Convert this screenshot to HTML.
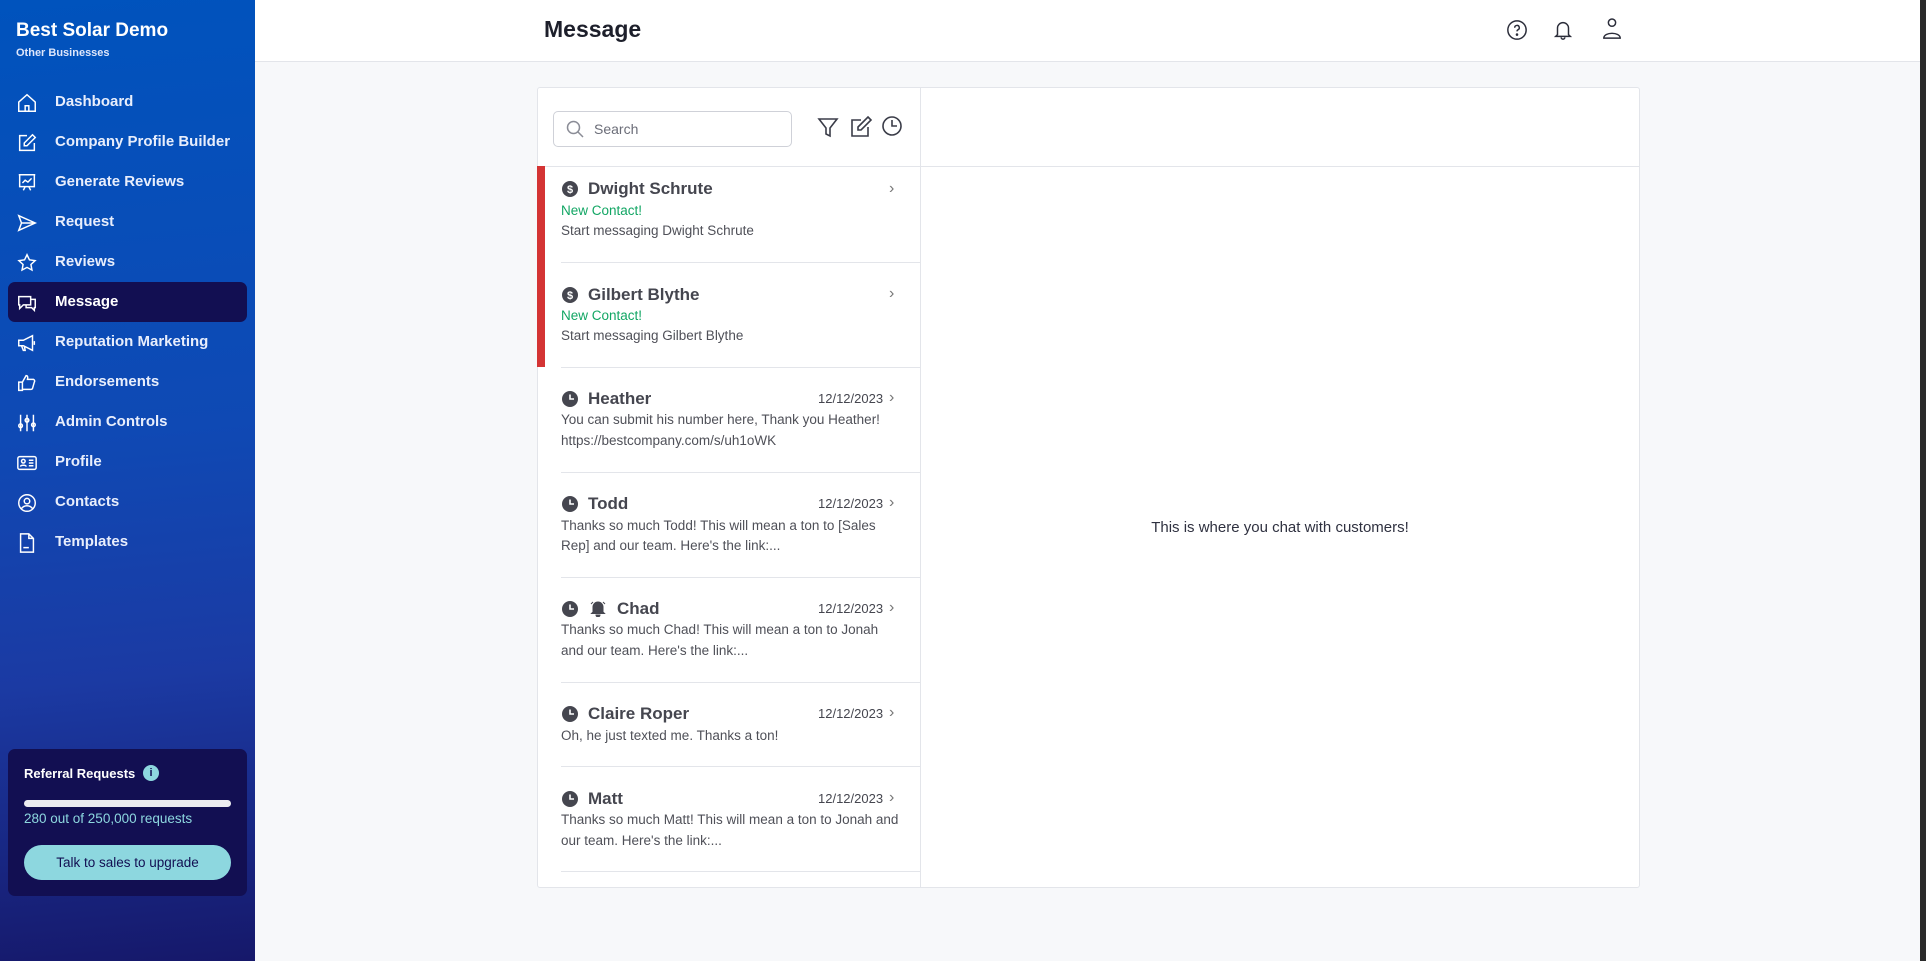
<!DOCTYPE html>
<html><head><meta charset="utf-8"><style>
*{box-sizing:border-box;margin:0;padding:0}
body{width:1926px;height:961px;overflow:hidden;font-family:"Liberation Sans",sans-serif;background:#f7f8fa;position:relative}
.abs{position:absolute}
#side{left:0;top:0;width:255px;height:961px;background:linear-gradient(175deg,#0053bd 0%,#0f49b4 45%,#1b3aa3 70%,#16186a 100%)}
.nav{position:absolute;left:0;width:255px;height:40px;color:#e8eefc;font-size:15px;font-weight:bold;line-height:40px}
.nav span{position:absolute;left:55px}
.nav svg{position:absolute;left:16px;top:10px}
.nav.active{left:8px;width:239px;background:#120f52;border-radius:7px;color:#fff}
.nav.active span{left:47px}.nav.active svg{left:8px}
#hdr{left:255px;top:0;width:1665px;height:62px;background:#fff;border-bottom:1px solid #e3e5ea}
#panel{left:537px;top:87px;width:1103px;height:801px;background:#fff;border:1px solid #e3e5ea;border-radius:3px}
.ln{position:absolute;line-height:20px;white-space:nowrap}
.nm{font-size:17px;font-weight:bold;color:#45464f}
.gr{font-size:13.5px;color:#12a664}
.tx{font-size:13.5px;color:#4f5058}
.sep{position:absolute;left:561px;width:359px;height:1px;background:#e3e5ea}
.scroll{left:1920px;top:0;width:6px;height:961px;background:#2a2a2a}
</style></head><body>
<svg style="position:absolute;width:0;height:0"><defs>
<symbol id="dol" viewBox="0 0 16 16"><circle cx="8" cy="8" r="8" fill="#45464f"/><text x="8" y="12" text-anchor="middle" font-size="11" font-weight="bold" fill="#fff" font-family="Liberation Sans">$</text></symbol>
<symbol id="clk" viewBox="0 0 16 16"><circle cx="8" cy="8" r="8" fill="#45464f"/><path d="M8 3.5V8h4" stroke="#fff" stroke-width="1.6" fill="none"/></symbol>
</defs></svg>
<div id="side" class="abs">
<div class="abs" style="left:16px;top:20px;color:#fff;font-size:19px;font-weight:bold">Best Solar Demo</div>
<div class="abs" style="left:16px;top:47px;color:#dfe7fb;font-size:11px;font-weight:bold">Other Businesses</div>

<div class="nav" style="top:82px"><svg width="22" height="22" viewBox="0 0 24 24" fill="none" stroke="#fff" stroke-width="1.6"><path d="M3 11 12 3l9 8v10H3z"/><path d="M10 21v-6h4v6"/></svg><span>Dashboard</span></div>
<div class="nav" style="top:122px"><svg width="22" height="22" viewBox="0 0 24 24" fill="none" stroke="#fff" stroke-width="1.6"><path d="M12 4H4v16h16v-8"/><path d="M18 3l3 3-9 9H9v-3z"/></svg><span>Company Profile Builder</span></div>
<div class="nav" style="top:162px"><svg width="22" height="22" viewBox="0 0 24 24" fill="none" stroke="#fff" stroke-width="1.6"><path d="M3 3h18M4 3v13h16V3M8 20l2-4M16 20l-2-4M7 12l3-3 3 2 4-4"/></svg><span>Generate Reviews</span></div>
<div class="nav" style="top:202px"><svg width="22" height="22" viewBox="0 0 24 24" fill="none" stroke="#fff" stroke-width="1.6"><path d="M3 4l18 8-18 8 3-8z M6 12h15"/></svg><span>Request</span></div>
<div class="nav" style="top:242px"><svg width="22" height="22" viewBox="0 0 24 24" fill="none" stroke="#fff" stroke-width="1.6"><path d="M12 3l2.7 5.6 6.1.8-4.5 4.2 1.1 6.1L12 16.8 6.6 19.7l1.1-6.1L3.2 9.4l6.1-.8z"/></svg><span>Reviews</span></div>
<div class="nav active" style="top:282px"><svg width="22" height="22" viewBox="0 0 24 24" fill="none" stroke="#fff" stroke-width="1.6"><path d="M3 5h13v9H8l-4 4v-4H3z"/><path d="M16 8h5v9h-1v3l-3-3h-6v-3"/></svg><span>Message</span></div>
<div class="nav" style="top:322px"><svg width="22" height="22" viewBox="0 0 24 24" fill="none" stroke="#fff" stroke-width="1.6"><path d="M3 9h5l10-5v16L8 15H3z M6 15l2 5h2l-1-5M20 10v4"/></svg><span>Reputation Marketing</span></div>
<div class="nav" style="top:362px"><svg width="22" height="22" viewBox="0 0 24 24" fill="none" stroke="#fff" stroke-width="1.6"><path d="M3 11h4v9H3zM7 11l4-7c2 0 2 2 1.5 4H19a2 2 0 0 1 1 3l-2 7a2 2 0 0 1-2 1H7"/></svg><span>Endorsements</span></div>
<div class="nav" style="top:402px"><svg width="22" height="22" viewBox="0 0 24 24" fill="none" stroke="#fff" stroke-width="1.6"><path d="M5 3v18M12 3v18M19 3v18"/><circle cx="5" cy="15" r="2"/><circle cx="12" cy="9" r="2"/><circle cx="19" cy="14" r="2"/></svg><span>Admin Controls</span></div>
<div class="nav" style="top:442px"><svg width="22" height="22" viewBox="0 0 24 24" fill="none" stroke="#fff" stroke-width="1.6"><rect x="2" y="5" width="20" height="14" rx="2"/><circle cx="8" cy="10" r="2"/><path d="M5 16c0-2 6-2 6 0M14 9h5M14 12h5M14 15h5"/></svg><span>Profile</span></div>
<div class="nav" style="top:482px"><svg width="22" height="22" viewBox="0 0 24 24" fill="none" stroke="#fff" stroke-width="1.6"><circle cx="12" cy="12" r="9"/><circle cx="12" cy="10" r="3"/><path d="M6 18c3-4 9-4 12 0"/></svg><span>Contacts</span></div>
<div class="nav" style="top:522px"><svg width="22" height="22" viewBox="0 0 24 24" fill="none" stroke="#fff" stroke-width="1.6"><path d="M5 2h9l5 5v15H5z M14 2v5h5M8 17h6"/></svg><span>Templates</span></div>

<div class="abs" style="left:8px;top:749px;width:239px;height:147px;background:#120f52;border-radius:7px">
<div class="abs" style="left:16px;top:17px;color:#fff;font-size:13px;font-weight:bold">Referral Requests</div>
<div class="abs" style="left:135px;top:16px;width:16px;height:16px;border-radius:8px;background:#8dd7df;color:#120f52;font-size:11px;font-weight:bold;text-align:center;line-height:16px">i</div>
<div class="abs" style="left:16px;top:51px;width:207px;height:7px;border-radius:4px;background:#ececf0"></div>
<div class="abs" style="left:16px;top:62px;color:#8dd7df;font-size:13.5px">280 out of 250,000 requests</div>
<div class="abs" style="left:16px;top:96px;width:207px;height:35px;border-radius:18px;background:#8dd7df;color:#120f52;font-size:13.5px;text-align:center;line-height:35px">Talk to sales to upgrade</div>
</div>
</div>

<div id="hdr" class="abs">
<div class="abs" style="left:289px;top:16px;font-size:23px;font-weight:bold;color:#1d1f2b">Message</div>
<svg class="abs" style="left:1251px;top:19px" width="22" height="22" viewBox="0 0 24 24" fill="none" stroke="#2b2d3a" stroke-width="1.6"><circle cx="12" cy="12" r="10"/><path d="M9.5 9.5a2.5 2.5 0 1 1 3.5 2.3c-.7.4-1 .9-1 1.7"/><circle cx="12" cy="17" r=".6" fill="#2b2d3a"/></svg>
<svg class="abs" style="left:1297px;top:18px" width="22" height="24" viewBox="0 0 24 26" fill="none" stroke="#2b2d3a" stroke-width="1.6"><path d="M6 18V11a6 6 0 0 1 12 0v7l2 2H4z M10 21a2 2 0 0 0 4 0"/></svg>
<svg class="abs" style="left:1347px;top:17px" width="20" height="24" viewBox="0 0 22 26" fill="none" stroke="#2b2d3a" stroke-width="1.6"><circle cx="11" cy="6" r="4"/><path d="M2 23c0-7 18-7 18 0z"/></svg>
</div>

<div id="panel" class="abs"></div>
<div class="abs" style="left:920px;top:88px;width:1px;height:799px;background:#e3e5ea"></div>
<div class="abs" style="left:538px;top:166px;width:1101px;height:1px;background:#e3e5ea"></div>
<div class="abs" style="left:553px;top:111px;width:239px;height:36px;border:1px solid #cfd1d8;border-radius:5px;background:#fff"></div>
<svg class="abs" style="left:565px;top:119px" width="20" height="20" viewBox="0 0 20 20" fill="none" stroke="#8a8c96" stroke-width="1.5"><circle cx="8.5" cy="8.5" r="6"/><path d="M13 13l5 5"/></svg>
<div class="abs" style="left:594px;top:119px;font-size:14px;color:#6b6d78;line-height:20px">Search</div>
<svg class="abs" style="left:817px;top:116px" width="22" height="24" viewBox="0 0 22 24" fill="none" stroke="#3a3c48" stroke-width="1.6"><path d="M2 3h18l-7 9v8l-4-2v-6z"/></svg>
<svg class="abs" style="left:849px;top:115px" width="24" height="24" viewBox="0 0 24 24" fill="none" stroke="#3a3c48" stroke-width="1.6"><path d="M12 5H3v16h16v-9"/><path d="M19 2l3 3-10 10H9v-3z"/></svg>
<svg class="abs" style="left:881px;top:115px" width="22" height="22" viewBox="0 0 22 22" fill="none" stroke="#3a3c48" stroke-width="1.6"><circle cx="11" cy="11" r="9"/><path d="M11 5v6h5"/></svg>

<div class="abs" style="left:537px;top:166px;width:8px;height:201px;background:#d43434"></div>

<svg class="abs" style="left:562px;top:181px" width="16" height="16"><use href="#dol"/></svg>
<div class="ln nm" style="left:588px;top:179px">Dwight Schrute</div>
<div class="ln gr" style="left:561px;top:201px">New Contact!</div>
<div class="ln tx" style="left:561px;top:221px">Start messaging Dwight Schrute</div>
<div class="ln" style="left:889px;top:179px;color:#777">›</div>
<div class="sep" style="top:262px"></div>

<svg class="abs" style="left:562px;top:287px" width="16" height="16"><use href="#dol"/></svg>
<div class="ln nm" style="left:588px;top:285px">Gilbert Blythe</div>
<div class="ln gr" style="left:561px;top:306px">New Contact!</div>
<div class="ln tx" style="left:561px;top:326px">Start messaging Gilbert Blythe</div>
<div class="ln" style="left:889px;top:284px;color:#777">›</div>
<div class="sep" style="top:367px"></div>

<svg class="abs" style="left:562px;top:391px" width="16" height="16"><use href="#clk"/></svg>
<div class="ln nm" style="left:588px;top:389px">Heather</div>
<div class="ln" style="left:818px;top:389px;font-size:13px;color:#45464f">12/12/2023</div>
<div class="ln" style="left:889px;top:388px;color:#777">›</div>
<div class="ln tx" style="left:561px;top:410px">You can submit his number here, Thank you Heather!</div>
<div class="ln tx" style="left:561px;top:431px">https://bestcompany.com/s/uh1oWK</div>
<div class="sep" style="top:472px"></div>

<svg class="abs" style="left:562px;top:496px" width="16" height="16"><use href="#clk"/></svg>
<div class="ln nm" style="left:588px;top:494px">Todd</div>
<div class="ln" style="left:818px;top:494px;font-size:13px;color:#45464f">12/12/2023</div>
<div class="ln" style="left:889px;top:493px;color:#777">›</div>
<div class="ln tx" style="left:561px;top:516px">Thanks so much Todd! This will mean a ton to [Sales</div>
<div class="ln tx" style="left:561px;top:536px">Rep] and our team. Here's the link:...</div>
<div class="sep" style="top:577px"></div>

<svg class="abs" style="left:562px;top:601px" width="16" height="16"><use href="#clk"/></svg>
<svg class="abs" style="left:590px;top:600px" width="16" height="17" viewBox="0 0 16 17"><path d="M3 12V7a5 5 0 0 1 10 0v5l1.5 1.5h-13z M6 15a2 2 0 0 0 4 0z M1 4l2-2M15 4l-2-2" fill="#45464f" stroke="#45464f" stroke-width="1"/></svg>
<div class="ln nm" style="left:617px;top:599px">Chad</div>
<div class="ln" style="left:818px;top:599px;font-size:13px;color:#45464f">12/12/2023</div>
<div class="ln" style="left:889px;top:598px;color:#777">›</div>
<div class="ln tx" style="left:561px;top:620px">Thanks so much Chad! This will mean a ton to Jonah</div>
<div class="ln tx" style="left:561px;top:641px">and our team. Here's the link:...</div>
<div class="sep" style="top:682px"></div>

<svg class="abs" style="left:562px;top:706px" width="16" height="16"><use href="#clk"/></svg>
<div class="ln nm" style="left:588px;top:704px">Claire Roper</div>
<div class="ln" style="left:818px;top:704px;font-size:13px;color:#45464f">12/12/2023</div>
<div class="ln" style="left:889px;top:703px;color:#777">›</div>
<div class="ln tx" style="left:561px;top:726px">Oh, he just texted me. Thanks a ton!</div>
<div class="sep" style="top:766px"></div>

<svg class="abs" style="left:562px;top:791px" width="16" height="16"><use href="#clk"/></svg>
<div class="ln nm" style="left:588px;top:789px">Matt</div>
<div class="ln" style="left:818px;top:789px;font-size:13px;color:#45464f">12/12/2023</div>
<div class="ln" style="left:889px;top:788px;color:#777">›</div>
<div class="ln tx" style="left:561px;top:810px">Thanks so much Matt! This will mean a ton to Jonah and</div>
<div class="ln tx" style="left:561px;top:831px">our team. Here's the link:...</div>
<div class="sep" style="top:871px"></div>

<div class="abs" style="left:921px;top:518px;width:718px;text-align:center;font-size:15px;color:#2f3140;line-height:20px">This is where you chat with customers!</div>
<div class="abs scroll"></div>
</body></html>
